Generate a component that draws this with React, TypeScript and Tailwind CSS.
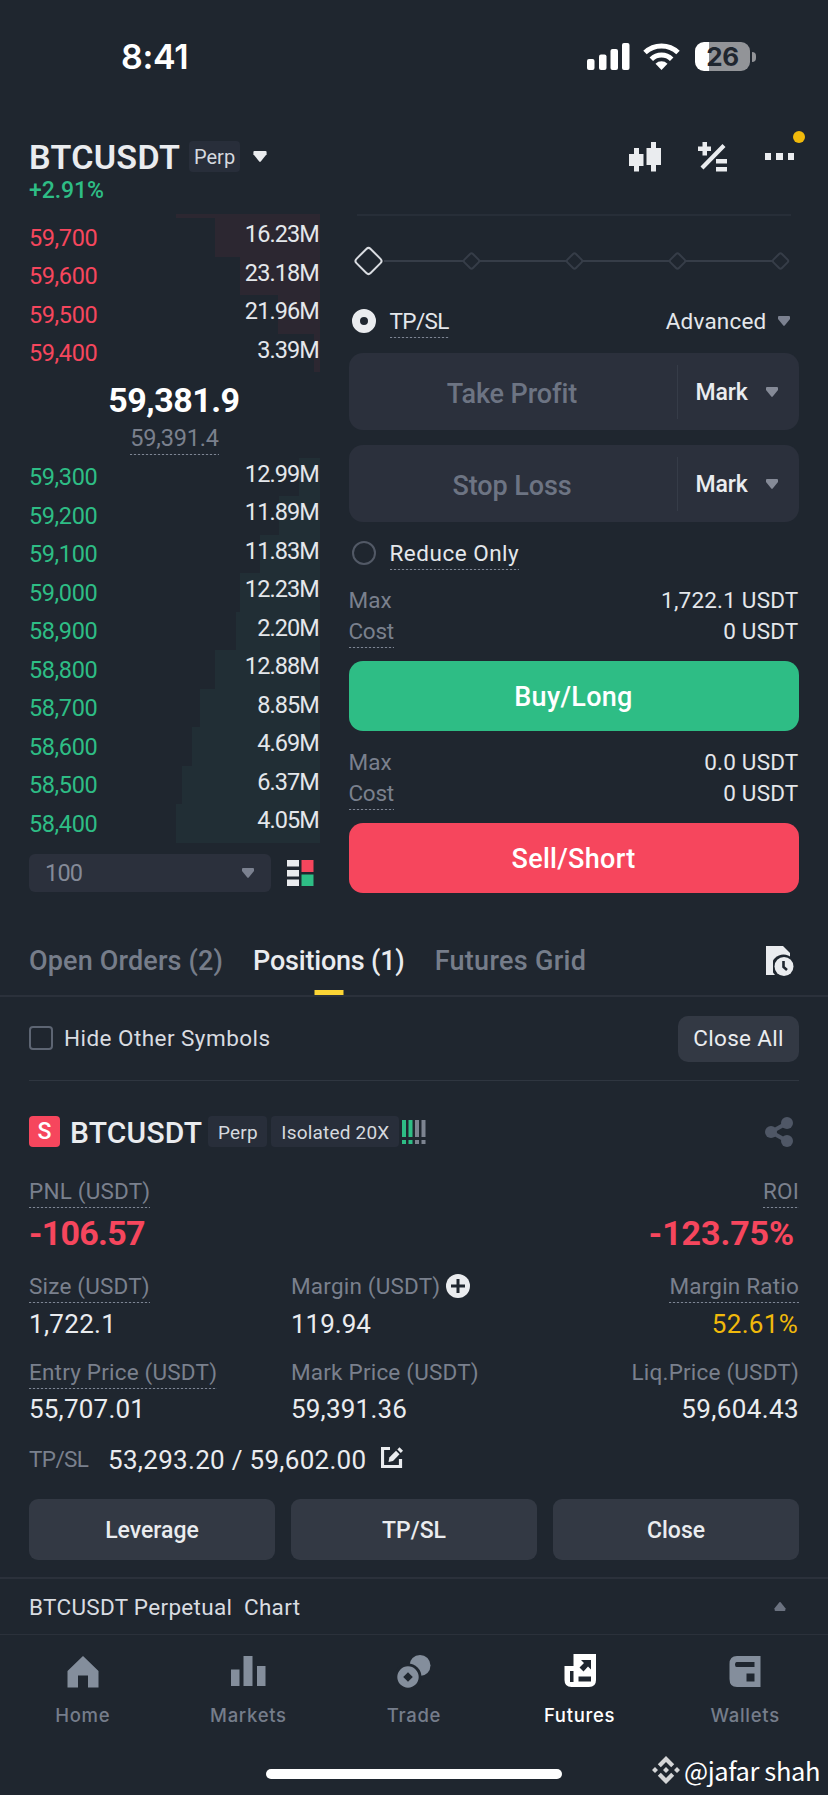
import { ReactNode } from 'react';
import clsx from 'clsx';

type Level = {
  price: string;
  amount: string;
  depth: number;
};

const asks: Level[] = [
  { price: '59,700', amount: '16.23M', depth: 105 },
  { price: '59,600', amount: '23.18M', depth: 80 },
  { price: '59,500', amount: '21.96M', depth: 42 },
  { price: '59,400', amount: '3.39M', depth: 6 },
];

const bids: Level[] = [
  { price: '59,300', amount: '12.99M', depth: 21 },
  { price: '59,200', amount: '11.89M', depth: 41 },
  { price: '59,100', amount: '11.83M', depth: 60 },
  { price: '59,000', amount: '12.23M', depth: 80 },
  { price: '58,900', amount: '2.20M', depth: 84 },
  { price: '58,800', amount: '12.88M', depth: 105 },
  { price: '58,700', amount: '8.85M', depth: 120 },
  { price: '58,600', amount: '4.69M', depth: 128 },
  { price: '58,500', amount: '6.37M', depth: 138 },
  { price: '58,400', amount: '4.05M', depth: 144 },
];

function Dotted({ children, className }: { children: ReactNode; className?: string }) {
  return (
    <span className={clsx('inline-flex flex-col whitespace-nowrap', className)}>
      <span className="leading-8">{children}</span>
      <span className="h-px bg-[repeating-linear-gradient(90deg,#7d8593_0_2px,#2b323d_2px_4px)]" />
    </span>
  );
}

function Caret({ className }: { className?: string }) {
  return (
    <svg viewBox="0 0 12 10" className={clsx('shrink-0', className)} fill="currentColor">
      <path d="M1 0h10q1 0 1 1v2L6.7 9.6q-.7.7-1.4 0L0 3V1q0-1 1-1z" />
    </svg>
  );
}

function StatusBar() {
  return (
    <div className="flex h-[112px] items-center justify-between pl-[121px] pr-[72px] pt-px">
      <span className="font-[Inter,sans-serif] text-[34px] font-semibold leading-none tracking-[-0.3px] text-white">8:41</span>
      <div className="flex items-center">
        <svg width="43" height="27" viewBox="0 0 43 27" fill="#fff">
          <rect x="0" y="16" width="7.5" height="11" rx="2" />
          <rect x="12" y="11.5" width="7.5" height="15.5" rx="2" />
          <rect x="23.5" y="6" width="7.5" height="21" rx="2" />
          <rect x="35" y="0" width="7.5" height="27" rx="2" />
        </svg>
        <svg width="37" height="27" viewBox="0 0 37 27" className="ml-[13px]" fill="none" stroke="#fff" strokeWidth="5">
          <path d="M2 9.5a24 24 0 0 1 33 0" />
          <path d="M8.3 16.2a14.8 14.8 0 0 1 20.4 0" />
          <path d="M18.5 27l-6-6.2a8.6 8.6 0 0 1 12 0z" fill="#fff" stroke="none" />
        </svg>
        <div className="ml-[15px] flex h-[29px] w-[55px] items-center justify-center overflow-hidden rounded-[9px] bg-[linear-gradient(90deg,#fff_14px,#929498_14px)] font-[Inter,sans-serif] text-[26px] font-bold leading-none tracking-[-0.5px] text-[#1f262f]">
          26
        </div>
        <div className="ml-[2px] h-[10px] w-[4px] rounded-r-full bg-[#929498]" />
      </div>
    </div>
  );
}

function Header() {
  return (
    <div className="mt-[29px] px-[29px]">
      <div className="flex h-[34px] items-center pb-[3px]">
        <h1 className="text-[34px] font-semibold leading-none tracking-[0.3px] text-[#eaecef]">BTCUSDT</h1>
        <span className="ml-[9px] flex h-[31px] w-[51px] items-center justify-center rounded bg-[#282e3a] pt-px text-[20px] text-[#d5d9df]">Perp</span>
        <Caret className="ml-3 h-[11px] w-[16px] text-[#eaecef]" />
        <div className="ml-auto flex items-center text-[#eaecef]">
          <svg width="32" height="30" viewBox="0 0 32 30" fill="currentColor">
            <path d="M5 6h5v6h4.500v12H10v5.500H5V24H0V12h5zM22 0h5v6h5v17h-5v6.500h-5V23h-4.500V6H22z" />
          </svg>
          <svg width="30" height="30" viewBox="0 0 30 30" className="ml-[37px]" fill="currentColor">
            <path d="M4.500 0h4.500v4.500h4V9H9v4.500H4.500V9H0V4.500h4.500zM24.500 2l3 3L5.500 27.500l-3-3zM18 17h11v4.500H18zM18 25h11v4.500H18z" />
          </svg>
          <div className="relative ml-[37px] mr-[5px] flex gap-[5px]">
            <span className="h-[7px] w-[6.500px] bg-current" />
            <span className="h-[7px] w-[6.500px] bg-current" />
            <span className="h-[7px] w-[6.500px] bg-current" />
            <span className="absolute -right-[11px] -top-[22px] size-3 rounded-full bg-[#f0b90b]" />
          </div>
        </div>
      </div>
      <div className="h-[28px] pt-[1.500px] text-[23px] font-medium leading-[28px] tracking-[-0.1px] text-[#2ebd85]">+2.91%</div>
    </div>
  );
}

function BookRow({ level, side }: { level: Level; side: 'ask' | 'bid' }) {
  return (
    <div className="relative flex h-[38.5px] items-center justify-between">
      <span
        className={clsx('absolute right-0 top-0 h-full', side === 'ask' ? 'bg-[#2c2731]' : 'bg-[#212e35]')}
        style={{ width: level.depth }}
      />
      <span className={clsx('relative pt-[2px] tracking-[-0.4px]', side === 'ask' ? 'text-[#f6465d]' : 'text-[#2ebd85]')}>
        {level.price}
      </span>
      <span className="relative pb-[5px] pr-px tracking-[-0.9px] text-[#e4e7eb]">{level.amount}</span>
    </div>
  );
}

function OrderBook() {
  return (
    <div className="w-[291px] pt-[11px] text-[23.500px] leading-none">
      <div className="ml-auto h-1 w-[144px] bg-[#2c2731]" />
      {asks.map(level => <BookRow key={level.price} level={level} side="ask" />)}

      {/* Last and mark price */}
      <div className="flex h-[85.500px] flex-col items-center">
        <div className="flex h-[50px] items-center pr-px pt-[6px] text-[34px] font-bold tracking-[-0.5px] text-white">59,381.9</div>
        <Dotted className="tracking-[-0.2px] text-[#7a808d]">59,391.4</Dotted>
      </div>

      {bids.map(level => <BookRow key={level.price} level={level} side="bid" />)}

      <div className="mt-[11.500px] flex items-center">
        <div className="flex h-[38px] w-[242px] items-center justify-between rounded-md bg-[#2b303c] pl-4 pr-[17px] text-[#848a98]">
          <span className="pt-[2px] tracking-[-0.8px]">100</span>
          <Caret className="h-[10px] w-[12px] text-[#7b8190]" />
        </div>
        <svg width="27" height="26" viewBox="0 0 27 26" className="ml-4">
          <path d="M0 0h12v6.500H0zM0 10h12v6.500H0zM0 19.500h12V26H0z" fill="#eaecef" />
          <path d="M14.500 0H26.500v12H14.500z" fill="#f6465d" />
          <path d="M14.500 14.500H26.500V26H14.500z" fill="#2ebd85" />
        </svg>
      </div>
    </div>
  );
}

function TriggerField({ label }: { label: string }) {
  return (
    <div className="mt-[15px] flex h-[77px] w-[450px] items-center rounded-[14px] bg-[#2b303c]">
      <div className="w-[328px] pr-px pt-[6px] text-center text-[27px] font-medium tracking-[-0.1px] text-[#6d7483]">{label}</div>
      <div className="h-[54px] w-px bg-[#363c48]" />
      <div className="flex flex-1 items-center justify-between pl-[18px] pr-[21px] text-[23px] font-medium text-[#eaecef]">
        <span className="pt-[4px] tracking-[-0.1px]">Mark</span>
        <Caret className="h-[10px] w-[12px] text-[#858a97]" />
      </div>
    </div>
  );
}

function CostLines({ max }: { max: string }) {
  return (
    <div className="flex justify-between">
      <div className="flex flex-col items-start text-[#7a808d]">
        <span className="leading-[30px]">Max</span>
        <Dotted className="tracking-[-0.3px]">Cost</Dotted>
      </div>
      <div className="flex flex-col items-end tracking-[0.2px] text-[#e4e7eb]">
        <span className="leading-[30px]">{max} USDT</span>
        <span className="leading-8">0 USDT</span>
      </div>
    </div>
  );
}

function OrderForm() {
  const stops = [123, 226, 329, 432];

  return (
    <div className="ml-[28.500px] w-[450px] pt-[11px] text-[22.500px] tracking-[0.1px] text-[#e4e7eb]">
      <div className="ml-2 h-[2px] w-[434px] bg-[#272e38]" />

      {/* Order size slider */}
      <svg width="450" height="30" viewBox="0 0 450 30" className="mt-[30px]" fill="none">
        {stops.map(x => (
          <g key={x} stroke="#363d48" strokeWidth="2">
            <path d={`M${x - (x === 123 ? 88 : 95)} 15H${x - 8}`} />
            <rect x={x - 6.5} y="9" width="12" height="12" rx="2" transform={`rotate(45 ${x - 0.5} 15)`} />
          </g>
        ))}
        <rect x="9.500" y="5" width="20" height="20" rx="3" transform="rotate(45 19.5 15)" stroke="#d9dce1" strokeWidth="2" />
      </svg>

      <div className="mt-[29px] flex items-start justify-between">
        <div className="flex">
          <span className="ml-[3px] mr-[14px] mt-1 size-6 rounded-full border-[8px] border-[#eaecef]" />
          <Dotted className="tracking-[-0.6px]">TP/SL</Dotted>
        </div>
        <div className="flex items-center pr-[9px]">
          <span className="leading-8 tracking-[0.2px]">Advanced</span>
          <Caret className="ml-[11px] h-[10px] w-[12px] text-[#7b8190]" />
        </div>
      </div>

      <TriggerField label="Take Profit" />
      <TriggerField label="Stop Loss" />

      <div className="mb-[15px] mt-[15px] flex">
        <span className="ml-[3px] mr-[14px] mt-1 size-6 rounded-full border-2 border-[#525966]" />
        <Dotted className="tracking-[0.5px]">Reduce Only</Dotted>
      </div>

      <CostLines max="1,722.1" />
      <button className="mb-4 mt-[13px] flex h-[70px] w-full items-center justify-center rounded-[14px] bg-[#2ebd85] pt-[2px] text-[27px] font-medium tracking-[0.3px] text-white">
        Buy/Long
      </button>
      <CostLines max="0.0" />
      <button className="mt-[13px] flex h-[70px] w-full items-center justify-center rounded-[14px] bg-[#f6465d] pt-[2px] text-[27px] font-medium tracking-[0.3px] text-white">
        Sell/Short
      </button>
    </div>
  );
}

function Tabs() {
  return (
    <div className="mt-[33px] flex h-[71px] items-center border-b-2 border-[#2b313b] px-[29px] text-[27px] font-medium text-[#767d8a]">
      <span className="pt-[2px] tracking-[0.15px]">Open Orders (2)</span>
      <span className="relative ml-[30px] flex h-full items-center pt-[2px] tracking-[-0.2px] text-[#eaecef]">
        Positions (1)
        <span className="absolute bottom-0 left-1/2 h-[5px] w-[29px] -translate-x-1/2 bg-[#fcd535]" />
      </span>
      <span className="ml-[30px] pt-[2px] tracking-[0.3px]">Futures Grid</span>
      <svg width="28" height="30" viewBox="0 0 28 30" className="ml-auto mr-[5px]">
        <path d="M0 0h17l7 7v22H0z" fill="#eaecef" />
        <circle cx="17.500" cy="20.500" r="12" fill="#1f262f" />
        <path d="M0 0h7v29H0z" fill="#eaecef" />
        <circle cx="18" cy="20.500" r="9.500" fill="#eaecef" />
        <path d="M17.500 15v6l3.500 3" fill="none" stroke="#1f262f" strokeWidth="2.600" />
      </svg>
    </div>
  );
}

function Stat({ label, value, align, dotted, icon, valueClass }: {
  label: string;
  value: string;
  align?: 'right';
  dotted?: boolean;
  icon?: ReactNode;
  valueClass: string;
}) {
  return (
    <div className={clsx('flex flex-col', align === 'right' ? 'items-end' : 'items-start')}>
      <div className="flex h-[33px] items-start text-[#7a808d]">
        {dotted ? <Dotted>{label}</Dotted> : <span className="leading-8">{label}</span>}
        {icon}
      </div>
      <div className={clsx('flex items-center', valueClass)}>{value}</div>
    </div>
  );
}

function PositionCard() {
  const plus = (
    <svg width="24" height="24" viewBox="0 0 24 24" className="ml-[6px] mt-1">
      <circle cx="12" cy="12" r="12" fill="#eaecef" />
      <path d="M12 5v14M5 12h14" stroke="#1f262f" strokeWidth="3" />
    </svg>
  );

  return (
    <div className="px-[29px] text-[22.500px] tracking-[0.2px]">
      <div className="flex h-[84px] items-center border-b border-[#2f3640] text-[#d9dce1]">
        <span className="mb-px size-6 rounded border-2 border-[#5d6573]" />
        <span className="ml-[11px] tracking-[0.45px]">Hide Other Symbols</span>
        <button className="ml-auto flex h-[46px] w-[121px] items-center justify-center rounded-[10px] bg-[#333944] pt-px tracking-[0.3px] text-[#eaecef]">
          Close All
        </button>
      </div>

      <div className="mt-[35px] flex h-[31px] items-center">
        <span className="flex size-[31px] items-center justify-center rounded bg-[#f6465d] pt-px text-[23px] font-medium text-white">S</span>
        <h2 className="ml-[10px] pt-[3px] text-[30px] font-medium leading-none tracking-[0.2px] text-[#eaecef]">BTCUSDT</h2>
        <span className="ml-[6px] flex h-[31px] w-[59px] items-center justify-center rounded bg-[#282e3a] pt-[3px] text-[19px] text-[#d5d9df]">Perp</span>
        <span className="ml-1 flex h-[31px] w-[128px] items-center justify-center rounded bg-[#282e3a] pt-[3px] text-[19px] text-[#d5d9df]">Isolated 20X</span>
        <svg width="24" height="24" viewBox="0 0 24 24" className="ml-[3px]">
          <path d="M0 0h4v17H0zM0 20h4v4H0zM6.500 0h4v17h-4zM6.500 20h4v4h-4z" fill="#2ebd85" />
          <path d="M13 0h4v17h-4zM13 20h4v4h-4zM19.500 0h4v17h-4zM19.500 20h4v4h-4z" fill="#7d8491" />
        </svg>
        <svg width="28" height="30" viewBox="0 0 28 30" className="ml-auto mr-[6px]" fill="#4f5766">
          <path d="M22 6L6 15l16 9" fill="none" stroke="#4f5766" strokeWidth="4" />
          <circle cx="22" cy="6" r="6" />
          <circle cx="6" cy="15" r="6" />
          <circle cx="22" cy="24" r="6" />
        </svg>
      </div>

      <div className="mt-7 flex justify-between">
        <Stat label="PNL (USDT)" value="-106.57" dotted valueClass="h-[51px] text-[34px] font-bold tracking-[-0.7px] text-[#f6465d]" />
        <Stat label="ROI" value="-123.75%" align="right" dotted valueClass="h-[51px] pr-[5px] text-[34px] font-bold tracking-[-0.1px] text-[#f6465d]" />
      </div>

      <div className="mt-[11px] grid grid-cols-[262px_1fr_auto]">
        <Stat label="Size (USDT)" value="1,722.1" dotted valueClass="h-[42px] text-[26px] tracking-[0.3px] text-[#eaecef]" />
        <Stat label="Margin (USDT)" value="119.94" icon={plus} valueClass="h-[42px] text-[26px] tracking-normal text-[#eaecef]" />
        <Stat label="Margin Ratio" value="52.61%" align="right" dotted valueClass="h-[42px] pr-px text-[26px] tracking-[0.3px] text-[#f0b90b]" />
      </div>

      <div className="mt-[11px] grid grid-cols-[262px_1fr_auto]">
        <Stat label="Entry Price (USDT)" value="55,707.01" dotted valueClass="h-10 text-[26px] tracking-[0.2px] text-[#eaecef]" />
        <Stat label="Mark Price (USDT)" value="59,391.36" valueClass="h-10 text-[26px] tracking-[0.2px] text-[#eaecef]" />
        <Stat label="Liq.Price (USDT)" value="59,604.43" align="right" valueClass="h-10 text-[26px] tracking-[0.4px] text-[#eaecef]" />
      </div>

      <div className="flex h-[60px] items-center pt-px">
        <span className="w-[79px] tracking-[-0.6px] text-[#7a808d]">TP/SL</span>
        <span className="pt-px text-[26px] tracking-[0.3px] text-[#eaecef]">53,293.20 / 59,602.00</span>
        <svg width="22" height="22" viewBox="0 0 22 22" className="mb-[3px] ml-[15px]">
          <path d="M9 1.500H1.500V19.500H19.500V12" fill="none" stroke="#eaecef" strokeWidth="3.200" />
          <path d="M7.500 15l.8-4.500L15 3.800l3.500 3.500L12 14z" fill="#eaecef" />
          <path d="M16.300 2.500L18.500.2 22 3.700l-2.200 2.300z" fill="#eaecef" />
        </svg>
      </div>

      <div className="mt-[10px] grid grid-cols-3 gap-4">
        {['Leverage', 'TP/SL', 'Close'].map(action => (
          <button key={action} className="h-[61px] rounded-[9px] bg-[#333944] pt-[3px] text-[23px] font-medium tracking-[0px] text-[#eaecef]">
            {action}
          </button>
        ))}
      </div>
    </div>
  );
}

const navItems = [
  {
    label: 'Home',
    icon: <path d="M18 2L33.500 17v16.500H23V21.500H13v12H2.500V17z" />,
  },
  {
    label: 'Markets',
    icon: <path d="M1 15.500h8.500V32H1zM13.500 2h9v30h-9zM27 12h8.500v20H27z" />,
  },
  {
    label: 'Trade',
    icon: (
      <>
        <circle cx="24" cy="11.500" r="10.500" />
        <circle cx="12" cy="23" r="13.500" fill="#1f262f" />
        <path fillRule="evenodd" d="M12 12.300a10.700 10.700 0 1 0 0 21.400a10.700 10.700 0 1 0 0-21.400zM12 18.200L16.800 23 12 27.800 7.200 23z" />
      </>
    ),
  },
  {
    label: 'Futures',
    active: true,
    icon: (
      <path
        fillRule="evenodd"
        d="M11.500 0H34v26q0 7-7 7H9.500Q2.500 33 2.500 26V12h9zM8 17v11h3.500V17zM16.500 22.500v5H29v-5zM19 6h10v9.500l-3-3L21.500 17.500 17.500 13.500 22 9z"
      />
    ),
  },
  {
    label: 'Wallets',
    icon: (
      <path
        fillRule="evenodd"
        d="M10 2h23.500v31H10q-7.500 0-7.500-8V10Q2.500 2 10 2zM9.500 8q-1.500 0-1.500 2.500T9.500 13H27.500V8zM19.500 19.500v8h8v-8z"
      />
    ),
  },
];

function BottomNav() {
  return (
    <nav className="flex pt-[19px]">
      {navItems.map(item => (
        <div
          key={item.label}
          className={clsx('flex flex-1 flex-col items-center', item.active ? 'text-white' : 'text-[#848e9c]')}
        >
          <svg width="36" height="36" viewBox="0 0 36 36" fill="currentColor">{item.icon}</svg>
          <span
            className={clsx(
              'mt-[13px] font-[Inter,sans-serif] text-[18.500px] font-medium leading-6 tracking-[0.7px]',
              !item.active && 'text-[#757d8b]',
            )}
          >
            {item.label}
          </span>
        </div>
      ))}
    </nav>
  );
}

export default function App() {
  return (
    <div className="relative flex h-[1795px] w-[828px] flex-col overflow-hidden bg-[#1f262f] font-[Roboto,sans-serif]">
      <StatusBar />
      <Header />
      <div className="flex pl-[29px]">
        <OrderBook />
        <OrderForm />
      </div>
      <Tabs />
      <PositionCard />

      {/* Chart drawer */}
      <div className="mt-[17px] flex h-[58px] items-center justify-between border-b border-t-2 border-[#2b313b] pl-[29px] pr-[42px] text-[22.500px] text-[#d9dce1]">
        <span className="whitespace-pre pt-[2px] tracking-[0.3px]">BTCUSDT Perpetual  Chart</span>
        <Caret className="h-[9px] w-[12px] rotate-180 text-[#6b7280]" />
      </div>

      <BottomNav />
      <div className="mx-auto mt-[42px] h-[10px] w-[296px] rounded-full bg-white" />

      {/* Author tag */}
      <div className="absolute bottom-[5px] right-[8px] flex h-[40px] items-center gap-[4px] text-white">
        <svg width="28" height="28" viewBox="0 0 28 28" fill="#d4d5d7">
          <path d="M14 0l8.200 8.200-3 3L14 6l-5.200 5.200-3-3zM14 28l-8.200-8.200 3-3L14 22l5.200-5.200 3 3zM3 11l3 3-3 3-3-3zM25 11l3 3-3 3-3-3zM14 11l3 3-3 3-3-3z" />
        </svg>
        <span className="font-['Noto_Sans_CJK_SC',sans-serif] text-[25.500px] leading-none tracking-[-0.4px]">@jafar shah</span>
      </div>
    </div>
  );
}
